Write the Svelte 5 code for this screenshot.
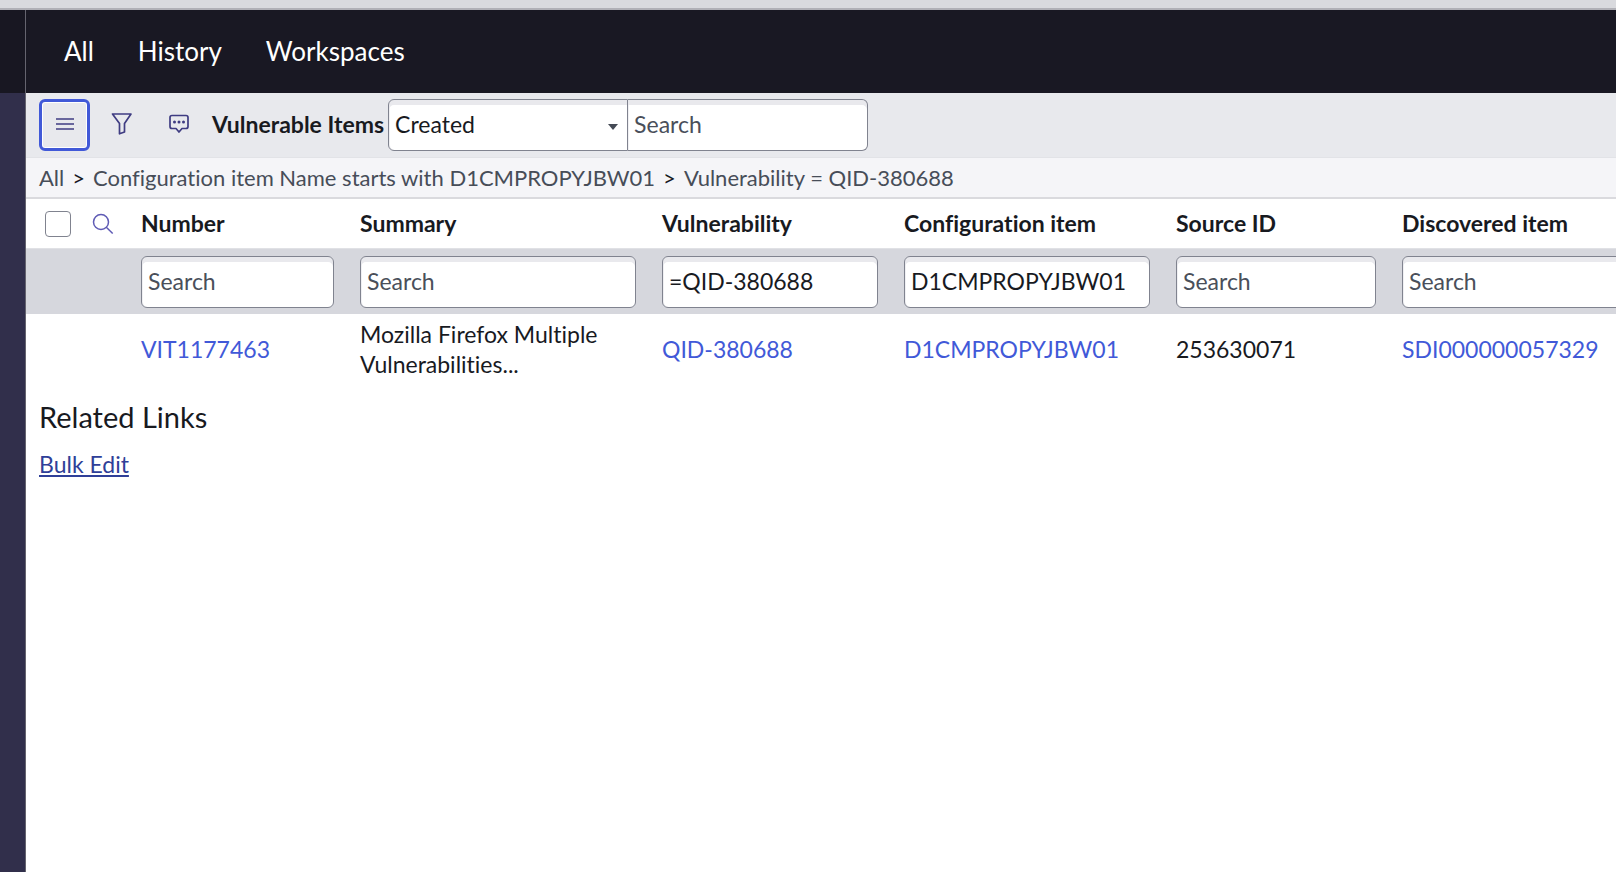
<script lang="ts">
  interface Column {
    id: string
    label: string
    filter: string
    value: string
    link?: boolean
  }

  const menus = ['All', 'History', 'Workspaces']

  const columns: Column[] = [
    { id: 'number', label: 'Number', filter: '', value: 'VIT1177463', link: true },
    { id: 'summary', label: 'Summary', filter: '', value: 'Mozilla Firefox Multiple Vulnerabilities...' },
    { id: 'vulnerability', label: 'Vulnerability', filter: '=QID-380688', value: 'QID-380688', link: true },
    { id: 'cmdb-ci', label: 'Configuration item', filter: 'D1CMPROPYJBW01', value: 'D1CMPROPYJBW01', link: true },
    { id: 'source-id', label: 'Source ID', filter: '', value: '253630071' },
    { id: 'discovered-item', label: 'Discovered item', filter: '', value: 'SDI000000057329', link: true },
  ]

  const crumbs = ['All', 'Configuration item Name starts with D1CMPROPYJBW01', 'Vulnerability = QID-380688']
</script>

<div class="window-edge"></div>
<div class="shell">
  <div class="rail"><div class="rail-top"></div></div>
  <div class="main">
    <nav class="menu-bar">
      {#each menus as menu}
        <button class="menu">{menu}</button>
      {/each}
    </nav>

    <div class="toolbar">
      <button class="tool focused" aria-label="List controls">
        <svg width="18" height="18" viewBox="0 0 18 18"><path d="M0 4h18M0 9h18M0 14h18" /></svg>
      </button>
      <button class="tool" aria-label="Filter">
        <svg width="22" height="22" viewBox="0 0 22 22"><path d="M1.500 1h18.500l-6.500 9.500v8.500l-5 1.800v-10.300z" /></svg>
      </button>
      <button class="tool" aria-label="Activity stream">
        <svg width="20" height="20" viewBox="0 0 20 20">
          <path d="M3 1.500h14q2 0 2 2v9q0 2-2 2h-4l-3 3.500-3-3.500H3q-2 0-2-2v-9q0-2 2-2z" />
          <g class="dots">
            <circle cx="5.500" cy="8" r="1.500" />
            <circle cx="10" cy="8" r="1.500" />
            <circle cx="14.500" cy="8" r="1.500" />
          </g>
        </svg>
      </button>
      <h1>Vulnerable Items</h1>
      <div class="search-group">
        <div class="select-wrap">
          <select class="field" aria-label="Search field">
            <option>Created</option>
          </select>
          <svg class="caret" width="10" height="6" viewBox="0 0 10 6"><path d="M0 0h10L5 6z" /></svg>
        </div>
        <input class="field" type="text" placeholder="Search" aria-label="Search list" />
      </div>
    </div>

    <div class="breadcrumbs">
      {#each crumbs as crumb, i}
        {#if i > 0}<span class="separator">&gt;</span>{/if}
        <a href="#crumb-{i}">{crumb}</a>
      {/each}
    </div>

    <div class="list">
      <table>
        <colgroup>
          <col class="col-select" />
          {#each columns as column}
            <col class="col-{column.id}" />
          {/each}
        </colgroup>
        <thead>
          <tr class="labels">
            <td>
              <div class="select-cell">
                <input type="checkbox" aria-label="Select all" />
                <button class="search-toggle" aria-label="Column search">
                  <svg width="22" height="22" viewBox="0 0 22 22"><circle cx="9" cy="9" r="7.500" /><path d="M14.300 14.300l6.400 6.200" /></svg>
                </button>
              </div>
            </td>
            {#each columns as column}
              <th scope="col">{column.label}</th>
            {/each}
          </tr>
          <tr class="filters">
            <td></td>
            {#each columns as column}
              <td>
                <input class="field" type="text" placeholder="Search" value={column.filter} aria-label="Search {column.label}" />
              </td>
            {/each}
          </tr>
        </thead>
        <tbody>
          <tr class="record">
            <td></td>
            {#each columns as column}
              <td>
                {#if column.link}
                  <a href="#{column.id}">{column.value}</a>
                {:else}
                  {column.value}
                {/if}
              </td>
            {/each}
          </tr>
        </tbody>
      </table>
    </div>

    <section class="related">
      <h2>Related Links</h2>
      <a href="#bulk-edit">Bulk Edit</a>
    </section>
  </div>
</div>

<style>
  :global(body) {
    background: #fff;
  }

  :global(#app) {
    display: flex;
    flex-direction: column;
    min-height: 100vh;
    overflow: hidden;
    font-family: Lato, sans-serif;
    font-size: 23px;
    font-variant-ligatures: none;
    line-height: 30px;
    color: #181a1f;
  }

  button,
  input,
  select {
    font: inherit;
    margin: 0;
    box-sizing: border-box;
  }

  button {
    padding: 0;
    border: 0;
    background: none;
    cursor: pointer;
  }

  svg {
    display: block;
    fill: none;
    stroke: #3f3c82;
    stroke-width: 1.7;
    stroke-linejoin: round;
  }

  .window-edge {
    height: 8px;
    background: #d9dade;
    border-bottom: 2px solid #b0b0b6;
  }

  .shell {
    display: flex;
    flex: 1;
  }

  .rail {
    flex: none;
    width: 25px;
    background: #312f4b;
    border-right: 1px solid #65646f;
  }

  .rail-top {
    height: 83px;
    background: #181722;
  }

  .main {
    flex: 1;
    min-width: 0;
  }

  .menu-bar {
    display: flex;
    align-items: center;
    gap: 44px;
    box-sizing: border-box;
    height: 83px;
    padding: 0 38px 2px;
    background: #191823;
  }

  .menu {
    font-size: 26px;
    color: #fff;
  }

  .toolbar {
    display: flex;
    align-items: center;
    height: 64px;
    padding-left: 13px;
    background: #e8e9ed;
    border-bottom: 1px solid #e2e3e7;
  }

  .tool {
    display: flex;
    align-items: center;
    justify-content: center;
    width: 51px;
    height: 52px;
    margin-right: 6px;
    padding-bottom: 2px;
    border-radius: 6px;
  }

  .tool.focused {
    border: 3px solid #4159d8;
    box-shadow: inset 0 0 0 1px #fff;
  }

  .dots {
    fill: #3f3c82;
    stroke: none;
  }

  h1 {
    margin: 0;
    padding: 0 4px 2px 2px;
    font-size: 23px;
    font-weight: 700;
    white-space: nowrap;
  }

  .search-group {
    display: flex;
  }

  .search-group .field {
    width: 240px;
  }

  .search-group > .field {
    border-left: 0;
    border-radius: 0 6px 6px 0;
  }

  .select-wrap {
    position: relative;
  }

  .select-wrap .field {
    appearance: none;
    display: block;
    border-radius: 6px 0 0 6px;
  }

  .caret {
    position: absolute;
    right: 10px;
    top: 25px;
    fill: #444a55;
    stroke: none;
    pointer-events: none;
  }

  .field {
    height: 52px;
    padding: 0 6px 2px;
    border: 1px solid #80838f;
    border-radius: 6px;
    background: #fff;
    box-shadow: inset 0 5px 0 #e9e9ed, inset 1px 0 0 #f0f0f3;
    color: #181a1f;
  }

  .field::placeholder {
    color: #4a4f5a;
    opacity: 1;
  }

  .breadcrumbs {
    display: flex;
    align-items: center;
    gap: 8px;
    height: 39px;
    padding-left: 13px;
    font-size: 22px;
    background: #f5f5f8;
    border-bottom: 2px solid #dadade;
    white-space: nowrap;
  }

  .breadcrumbs a {
    color: #474d58;
    text-decoration: none;
  }

  .list {
    overflow: hidden;
  }

  /* the last column runs on past the edge of the pane */
  table {
    width: calc(100% + 40px);
    table-layout: fixed;
    border-collapse: collapse;
  }

  .col-select {
    width: 115px;
  }

  .col-number {
    width: 219px;
  }

  .col-summary {
    width: 302px;
  }

  .col-vulnerability {
    width: 242px;
  }

  .col-cmdb-ci {
    width: 272px;
  }

  .col-source-id {
    width: 226px;
  }

  th,
  td {
    padding: 0 26px 0 0;
    text-align: left;
    vertical-align: middle;
  }

  th {
    padding-bottom: 2px;
    font-weight: 700;
    white-space: nowrap;
  }

  .labels {
    height: 49px;
  }

  .labels td {
    padding: 0;
  }

  .select-cell {
    display: flex;
    align-items: center;
    gap: 21px;
    padding-left: 19px;
  }

  input[type='checkbox'] {
    appearance: none;
    width: 26px;
    height: 26px;
    border: 1px solid #80838f;
    border-radius: 4px;
    background: #fff;
  }

  .search-toggle svg {
    stroke: #5f5bb5;
    stroke-width: 1.5;
  }

  .filters {
    background: #d6d7dd;
    box-shadow: inset 0 1px 0 #e0e1e5;
  }

  .filters td {
    padding-top: 8px;
    padding-bottom: 6px;
  }

  .filters .field {
    display: block;
    width: 100%;
  }

  .record {
    height: 70px;
  }

  .record a {
    color: #4159d8;
    text-decoration: none;
  }

  .related {
    padding: 15px 13px;
  }

  h2 {
    margin: 0 0 14px;
    font-size: 29px;
    line-height: 36px;
    font-weight: 400;
  }

  .related a {
    color: #2f3f98;
    text-decoration: underline;
    text-decoration-thickness: 2px;
    text-underline-offset: 2px;
  }
</style>
